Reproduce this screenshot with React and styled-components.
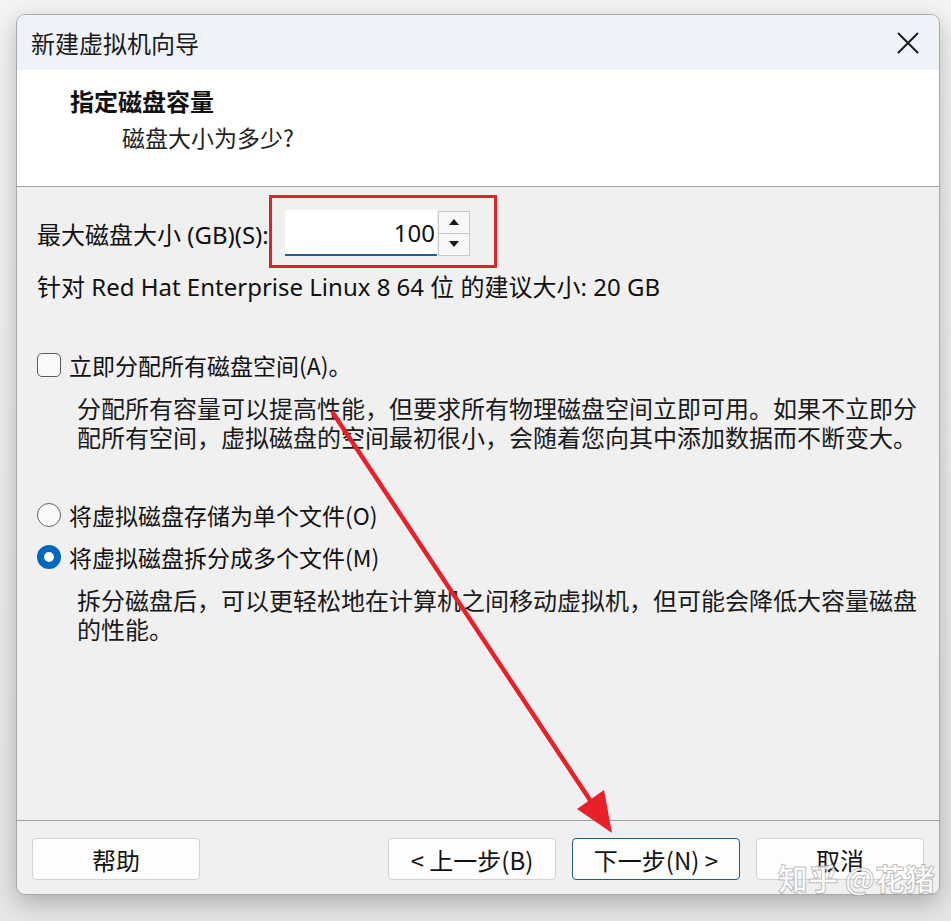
import React from 'react';
import styled, { createGlobalStyle } from 'styled-components';

const GlobalStyle = createGlobalStyle`
  body {
    margin: 0;
    background: #ededed;
    font-family: "Noto Sans", "Noto Sans CJK SC", sans-serif;
  }
`;

const Page = styled.div`
  position: relative;
  width: 951px;
  height: 921px;
  padding: 14px 0 0 16px;
  box-sizing: border-box;
  background: linear-gradient(#f4f4f4, #e6e6e6);
  overflow: hidden;
`;

const Dialog = styled.div`
  width: 924px;
  height: 881px;
  box-sizing: border-box;
  border: 1px solid #a8a8a8;
  border-radius: 9px;
  overflow: hidden;
  display: flex;
  flex-direction: column;
  background: #f0f0f0;
  box-shadow: 0 8px 24px rgba(0, 0, 0, 0.25);
`;

const TitleBar = styled.div`
  height: 55px;
  flex: none;
  display: flex;
  align-items: center;
  justify-content: space-between;
  padding: 0 18px 0 14px;
  background: #eef3fa;
  font-family: "Noto Sans CJK SC", sans-serif;
  font-size: 24px;
  color: #1a1a1a;
`;

const CloseIcon = styled.svg`
  width: 26px;
  height: 26px;
`;

const Header = styled.div`
  height: 117px;
  flex: none;
  box-sizing: border-box;
  background: #ffffff;
  border-bottom: 1px solid #a0a0a0;
  padding: 15px 0 0 53px;
  font-family: "Noto Sans CJK SC", sans-serif;
`;

const HeaderTitle = styled.div`
  font-size: 24px;
  font-weight: 700;
  line-height: 32px;
  color: #111;
`;

const HeaderSub = styled.div`
  font-size: 23px;
  line-height: 32px;
  margin: 4px 0 0 52px;
  color: #222;
`;

const Body = styled.div`
  flex: 1;
  padding: 23px 0 0 20px;
  font-size: 24px;
  color: #111;
`;

const SizeRow = styled.div`
  display: flex;
  align-items: center;
  height: 46px;
`;

const Label = styled.span`
  width: 248px;
  white-space: nowrap;
`;

const NumberField = styled.div`
  width: 152px;
  height: 46px;
  box-sizing: border-box;
  background: #fff;
  border-bottom: 2px solid #235f8f;
  display: flex;
  align-items: center;
  justify-content: flex-end;
  padding-right: 2px;
  font-size: 24px;
`;

const Spinner = styled.div`
  display: flex;
  flex-direction: column;
  width: 32px;
  height: 45px;
  margin-left: 1px;
`;

const SpinButton = styled.div`
  flex: 1;
  border: 1px solid #c9c9c9;
  background: #f7f7f7;
  display: flex;
  align-items: center;
  justify-content: center;
  & + & {
    border-top: none;
  }
`;

const Line = styled.div`
  line-height: 32px;
  margin-top: ${(p) => p.$top || 0}px;
`;

const Option = styled.div`
  display: flex;
  align-items: center;
  gap: 8px;
  height: 32px;
  margin-top: ${(p) => p.$top || 0}px;
  font-family: "Noto Sans CJK SC", sans-serif;
  font-size: 23px;
`;

const CheckBox = styled.span`
  width: 24px;
  height: 24px;
  box-sizing: border-box;
  border: 1.5px solid #5c5c5c;
  border-radius: 5px;
  background: #f9f9f9;
`;

const Radio = styled.span`
  width: 24px;
  height: 24px;
  box-sizing: border-box;
  border-radius: 50%;
  border: ${(p) => (p.$on ? '7px solid #0067c0' : '1.5px solid #636363')};
  background: ${(p) => (p.$on ? '#fff' : '#f9f9f9')};
`;

const Desc = styled.div`
  margin: ${(p) => p.$top || 0}px 0 0 40px;
  line-height: 29px;
  font-family: "Noto Sans CJK SC", sans-serif;
  color: #1a1a1a;
  white-space: nowrap;
`;

const Footer = styled.div`
  height: 74px;
  flex: none;
  border-top: 1px solid #a0a0a0;
  display: flex;
  padding: 17px 0 0 15px;
  box-sizing: border-box;
  gap: 16px;
`;

const Button = styled.div`
  width: 168px;
  height: 42px;
  box-sizing: border-box;
  border: 1px solid ${(p) => (p.$focus ? '#1b5f93' : '#d2d2d2')};
  border-radius: 4px;
  background: #fdfdfd;
  display: flex;
  align-items: center;
  justify-content: center;
  font-family: "Noto Sans CJK SC", sans-serif;
  font-size: 24px;
  color: #111;
  margin-left: ${(p) => p.$gap || 0}px;
`;

const RedBox = styled.div`
  position: absolute;
  left: 269px;
  top: 195px;
  width: 228px;
  height: 73px;
  box-sizing: border-box;
  border: 3px solid #d8262f;
`;

const Overlay = styled.svg`
  position: absolute;
  left: 0;
  top: 0;
  width: 951px;
  height: 921px;
  pointer-events: none;
`;

const Watermark = styled.div`
  position: absolute;
  left: 778px;
  top: 857px;
  white-space: nowrap;
  font-family: "Noto Sans CJK SC", sans-serif;
  font-size: 30px;
  line-height: 40px;
  font-weight: 700;
  color: rgba(255, 255, 255, 0.82);
  -webkit-text-stroke: 1px rgba(110, 110, 110, 0.45);
`;

const Arrow = ({ up }) => (
  <svg width="12" height="8" viewBox="0 0 12 8">
    <path d={up ? 'M1 7 L6 1 L11 7 Z' : 'M1 1 L6 7 L11 1 Z'} fill="#1a1a1a" />
  </svg>
);

export default function App() {
  return (
    <Page>
      <GlobalStyle />
      <Dialog>
        <TitleBar>
          <span>新建虚拟机向导</span>
          <CloseIcon viewBox="0 0 26 26">
            <path d="M3 3 L23 23 M23 3 L3 23" stroke="#1a1a1a" strokeWidth="2" />
          </CloseIcon>
        </TitleBar>
        <Header>
          <HeaderTitle>指定磁盘容量</HeaderTitle>
          <HeaderSub>磁盘大小为多少?</HeaderSub>
        </Header>
        <Body>
          <SizeRow>
            <Label>最大磁盘大小 (GB)(S):</Label>
            <NumberField>100</NumberField>
            <Spinner>
              <SpinButton><Arrow up /></SpinButton>
              <SpinButton><Arrow /></SpinButton>
            </Spinner>
          </SizeRow>
          <Line $top={15}>针对 Red Hat Enterprise Linux 8 64 位 的建议大小: 20 GB</Line>
          <Option $top={46}>
            <CheckBox />
            <span>立即分配所有磁盘空间(A)。</span>
          </Option>
          <Desc $top={12}>
            分配所有容量可以提高性能，但要求所有物理磁盘空间立即可用。如果不立即分
            <br />
            配所有空间，虚拟磁盘的空间最初很小，会随着您向其中添加数据而不断变大。
          </Desc>
          <Option $top={48}>
            <Radio />
            <span>将虚拟磁盘存储为单个文件(O)</span>
          </Option>
          <Option $top={10}>
            <Radio $on />
            <span>将虚拟磁盘拆分成多个文件(M)</span>
          </Option>
          <Desc $top={12}>
            拆分磁盘后，可以更轻松地在计算机之间移动虚拟机，但可能会降低大容量磁盘
            <br />
            的性能。
          </Desc>
        </Body>
        <Footer>
          <Button>帮助</Button>
          <Button $gap={172}>&lt; 上一步(B)</Button>
          <Button $focus>下一步(N) &gt;</Button>
          <Button>取消</Button>
        </Footer>
      </Dialog>
      <RedBox />
      <Overlay viewBox="0 0 951 921">
        <line x1="333" y1="413" x2="594" y2="806" stroke="#e8202a" strokeWidth="4.5" strokeLinecap="round" />
        <polygon points="612,833 604,790 577,809" fill="#e8202a" />
      </Overlay>
      <Watermark>知乎 @花猪</Watermark>
    </Page>
  );
}
